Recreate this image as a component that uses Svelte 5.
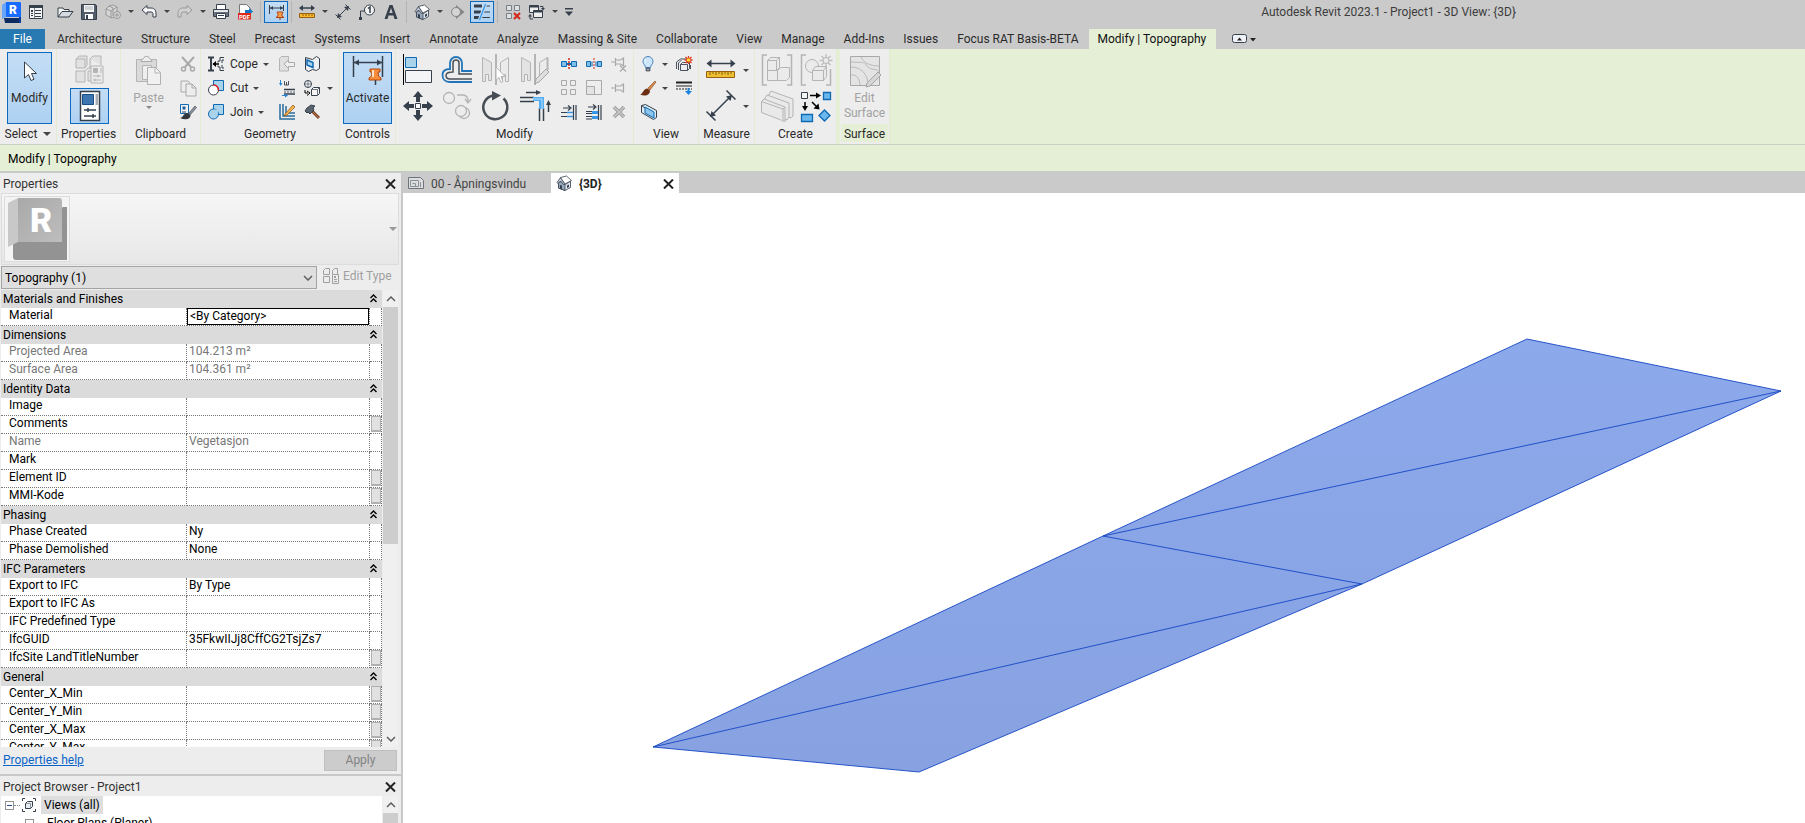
<script>
    const D = '#36404d'
    const B = '#0f6ab4'
    const L = '#a8d3ea'
    const G = '#b4b4b4'

    const house = `<g stroke="${D}" stroke-width=".8" stroke-linejoin="round"><path d="M2.500 7.500l3-1 4 3 5-3.500v6.500l-5.500 3-6.500-2.500z" fill="#dfe4ec"/><path d="M2.500 7.500l3-1 3.500 4V15.500l-6.500-2.500z" fill="#9aa9bd"/><path d="M1 7.500l3.500-5 4.500 6.500-1 1-3.500-4-2.500 2.500z" fill="#c3ccd9"/><path d="M4.500 2.500l6-1.500 5 4.500L9 9z" fill="#fff"/></g><path d="M4 10l2 .5v4L4 13.500zM11 10.500l2-1v2.500l-2 1z" fill="${D}"/>`
    const pages = (s, f) => `<path d="M1 1h7l2 2v9H1z" fill="${f}" stroke="${s}"/><path d="M6 4h6l4 4v8H6z" fill="#ededed" stroke="${s}"/><path d="M12 4v4h4" fill="none" stroke="${s}"/>`

    const icons = {
        list: `<path d="M1.500 1.500h13v13h-13z" fill="#f4f4f4" stroke="${D}"/><path d="M1 1h14v3H1z" fill="${D}"/><path d="M3 6h2v2H3zM3 9h2v1H3zM3 11h2v1H3zM7 6h6v1H7zM7 9h6v1H7zM7 12h6v1H7zM6 4h.6v10H6z" fill="${D}"/>`,
        open: `<path d="M1 13V4h5l1 1.500h5V8" fill="#f5f5f5" stroke="${D}"/><path d="M1 13l4-5.500h11L12 13z" fill="#d5dae0" stroke="${D}"/>`,
        save: `<path d="M.5.5h14l1 1v14H.5z" fill="#525d69" stroke="${D}"/><path d="M3 1h10v7H3z" fill="#f4f4f4"/><path d="M4 3h8M4 5h8" stroke="#aeb4bb"/><path d="M4 10h8v5H4z" fill="#fff"/><path d="M5 11h2v4H5z" fill="${D}"/>`,
        sync: `<g fill="#d5d5d5" stroke="#8c8c8c" stroke-width=".8"><path d="M1 5l3-3 4-1 4 2v8l-5 3-6-3zM1 5l5 2v7M6 7l6-4M4 2l4 2v8"/><circle cx="12" cy="11" r="3.500"/><path d="M10 11h4m-2-2v4"/></g>`,
        undo: `<path d="M1 6l5-4.500V4h4c4 0 5 3 5 6v3h-3v-3c0-1-.5-2-2-2H6v2.500z" fill="#f7f7f7" stroke="${D}"/>`,
        redo: `<path d="M15 6l-5-4.500V4H6C2 4 1 7 1 10v3h3v-3c0-1 .5-2 2-2h4v2.500z" fill="#d2d2d2" stroke="#999"/>`,
        print: `<path d="M3.500.5h9V6h-9z" fill="#fff" stroke="${D}"/><path d="M.5 5.500h15v7H.5z" fill="#6b7480" stroke="${D}"/><path d="M1 6h14v2H1z" fill="#e6e8ea"/><path d="M3.500 9.500h9v5h-9z" fill="#fff" stroke="${D}"/><path d="M5 11.500h6" stroke="${D}"/>`,
        pdf: `<path d="M2.500.5h7l4 4V13h-11z" fill="#fff" stroke="#777"/><path d="M8 6h4V4l4 3.500L12 11V9H8z" fill="#1476c4"/><path d="M1 9h13v6.500H1z" fill="#db2b1d"/><text x="7.500" y="14.500" font-family="Roboto, sans-serif" font-size="6" font-weight="700" text-anchor="middle" fill="#fff">PDF</text>`,
        dimpin: `<path d="M1.500 1v9M15.500 1v6M2 4h13" stroke="${D}" fill="none"/><path d="M2 4l3-2v4zM15 4l-3-2v4z" fill="${D}"/><path d="M9 8h6l-1 2v2l2 1.500H8L10 12v-2z" fill="#f9a04c" stroke="#b4460d"/><path d="M12 13.500V16" stroke="#8c3a12"/>`,
        ruler: `<path d="M1 4h14" stroke="${D}" stroke-width="1.500"/><path d="M0 4l4-3v6zM16 4l-4-3v6z" fill="${D}"/><path d="M.5 9.500h15v4H.5z" fill="#f5b92d" stroke="#9a6011"/><path d="M4 10v2m3-2v2m3-2v2m3-2v2" stroke="#9a6011"/>`,
        dim: `<path d="M3 13L13 3M.5 10.500l5 5M10.500.5l5 5" stroke="${D}" fill="none"/><path d="M2 14l1-5 4 4zM14 2l-1 5-4-4z" fill="${D}"/>`,
        tag: `<path d="M0 15h1.500V7H8" fill="none" stroke="${D}"/><path d="M0 13h3v3H0z" fill="${D}"/><circle cx="10.500" cy="6" r="5" fill="#f4f4f4" stroke="${D}"/><path d="M9 4.500L11 3v6" fill="none" stroke="${D}" stroke-width="1.500"/>`,
        text: `<path d="M1.500 15L6.500 1h3l5 14h-3l-1-3.500h-5L4.500 15zM6.300 9h3.400L8 4z" fill="${D}" fill-rule="evenodd"/>`,
        house,
        section: `<path d="M6 1l8.500 7L6 15z" fill="#858585"/><circle cx="6" cy="8" r="4.500" fill="#d4d4d4" stroke="#858585"/>`,
        thin: `<path d="M0 2h8M0 8h7M0 13.500h6" stroke="${D}" stroke-width="3"/><path d="M11 2h5M9 8h7M8 13.500h8" stroke="${D}"/><path d="M11.500 0l-6 16" stroke="#c2dcf4" stroke-width="3.500"/><path d="M11.500 0l-6 16" stroke="#3796e8" stroke-width="1.300"/>`,
        closewin: `<path d="M1.500 1.500h5v5h-5zM9.500 1.500h5v5h-5zM1.500 9.500h5v5h-5z" fill="#e0e0e0" stroke="#777f88"/><path d="M9 9l6 6m0-6l-6 6" stroke="#d22a1e" stroke-width="2.200"/>`,
        switch: `<path d="M.5 1.500h9v7h-9z" fill="#eee" stroke="${D}"/><path d="M4.500 6.500h9v7h-9z" fill="#eee" stroke="${D}"/><path d="M.5 2.500h9M4.500 7.500h9" stroke="${D}" stroke-width="2"/><path d="M11 2.500h3V5M4 15H1v-3" fill="none" stroke="${D}"/><path d="M12 4h4l-2 2.500zM-1 12.500h4L1 10z" fill="${D}"/>`,
        more: `<path d="M4 4h8v1.500H4zM4 7.500h8L8 12z" fill="${D}"/>`,

        cursor: `<path d="M10.500 7v16l4-3.500 2.500 6 3-1.200-2.500-5.800h5z" fill="#fff" stroke="${D}" stroke-linejoin="round"/>`,
        typeprops: `<g fill="#e2e2e2" stroke="${G}"><path d="M2 5l3-3h8v9l-2 3H2zM16 5l3-3h8v9M16 14V5l3-3M2 17h9v11H2zM14 17h4v10h-4zM2 5h9v9M11 17l3-3h5"/><path d="M17 12h12v17H17z" fill="#ececec"/><path d="M19.500 14.500h4v4h-4z" fill="${G}"/><path d="M19 22h8M19 26h8M24 20.500v3M21 24.500v3M27 14v5"/></g>`,
        palette: `<path d="M6.500 1.500h19v29h-19z" fill="#fff" stroke="${D}" stroke-width="1.500"/><path d="M8.500 4.500h11v10h-11z" fill="#3d76b1" stroke="#184c85"/><path d="M21.500 4h2.500v11h-2.500z" fill="#a9adb2"/><path d="M10 20h12M10 26h12M14 18v4M19 24v4" stroke="${D}" stroke-width="1.500"/>`,
        paste: `<path d="M3.500 4.500h20v22h-20z" fill="#dadada" stroke="${G}"/><path d="M8 6.500c0-2 2-1.500 3-4 1-1.500 4-1.500 5 0 1 2.500 3 2 3 4z" fill="#ededed" stroke="#a8a8a8"/><path d="M9.500 10.500h9v14h-9z" fill="#eee" stroke="${G}"/><path d="M14.500 12.500h8l5 5v12h-13z" fill="#f0f0f0" stroke="#b0b0b0"/><path d="M22 13v5h5" fill="none" stroke="${G}"/>`,
        cut: `<path d="M2 1l9 10M14 1L5 11" stroke="#a9a9a9" stroke-width="2"/><circle cx="3.500" cy="13" r="2" fill="none" stroke="#a9a9a9" stroke-width="1.500"/><circle cx="12.500" cy="13" r="2" fill="none" stroke="#a9a9a9" stroke-width="1.500"/>`,
        copyclip: pages('#a9a9a9', '#ececec'),
        match: `<path d="M.5.5h8v9h-8z" fill="#f4f4f4" stroke="${B}"/><path d="M2.500 2.500h3v3h-3z" fill="#215d9c"/><path d="M2 8h4" stroke="${D}"/><path d="M15 2L9 9l1.500 1.500 6-7z" fill="#8b929b" stroke="${D}" stroke-width=".6"/><path d="M0 14c3 0 3-5 8-5l2.500 2c0 5-6 5-10.500 3z" fill="#33363b"/>`,
        cope: `<path d="M0 1.500h6M0 14.500h6M3 1v14" stroke="${D}" stroke-width="2"/><path d="M5 8h6" stroke="#000" stroke-width="1.500"/><path d="M4.500 8L8 5v6z"/><path d="M16 1.500h-4V5h-2v1.500M16 4h-2v3M16 14.500h-4V11h-2V9.500M16 12h-2V9" stroke="${D}" fill="none"/>`,
        cutgeo: `<path d="M5.500.5h10v10h-10z" fill="${L}" stroke="${B}"/><circle cx="5.500" cy="10" r="5" fill="#fff" stroke="${D}"/><path d="M5.500 5a5 5 0 0 1 5 5.500" fill="none" stroke="#e02020" stroke-width="1.500"/>`,
        join: `<path d="M5.500.5h10v10h-10z" fill="${L}" stroke="${B}"/><circle cx="5.500" cy="10" r="5" fill="${L}" stroke="${B}"/><path d="M6 5.500h4V10H6z" fill="${L}"/>`,
        uncope: `<path d="M.5 2.500l2-2h7v3l-3 4.500 3 4v3h-9z" fill="#e0e0e0" stroke="${G}"/><path d="M5 8l4.500-4v2.500h6v4h-6V12.500z" fill="#efefef" stroke="#a9a9a9"/>`,
        beam: `<path d="M5 9.500h11M5 14h11" stroke="${D}" stroke-width="1.300"/><path d="M5 12h11" stroke="${D}" stroke-width=".8" stroke-dasharray="2 1"/><path d="M5.500 1v4h4V1M7.500 2v3" stroke="${D}" fill="none" stroke-width=".9"/><path d="M1.500 0v4M3 15.500h4" stroke="#2784d8"/><path d="M0 3h3.500L1.700 6zM6 13.500l3 2-3 2z" fill="#2784d8"/>`,
        layers: `<path d="M1 0v15h15M4 0v12h12M7 2v7h9" fill="none" stroke="#286c9c" stroke-width="1.500"/><path d="M6 10L14 1l2 2-8 8-3 1z" fill="#f4b64f" stroke="#8e4b10" stroke-width=".7"/>`,
        wallopen: `<path d="M1.500 1.500l7 2 4-3 3 2v10l-3 2-4-1-4 2-3-2z" fill="#eef0f2" stroke="${D}"/><path d="M3 4l6 2.500v5L3 9z" fill="${L}" stroke="${B}" stroke-width="1.500"/>`,
        split: `<circle cx="4" cy="4" r="3.500" fill="#f3f3f3" stroke="${D}"/><path d="M4 .5v7M.5 4h7" stroke="${D}" stroke-width=".6"/><path d="M7.500 9.500l2-2h6v6l-2 2h-6z" fill="#f5f5f5" stroke="${D}"/><path d="M13.500 15V9.500h-6M13.500 9.500l2-2" fill="none" stroke="${D}" stroke-width=".7"/><path d="M1 10v3h3M3 11l3 2-3 2.500" fill="none" stroke="#000"/>`,
        hammer: `<path d="M7 6l8 8" stroke="#7b4023" stroke-width="3"/><path d="M7 6l8 8" stroke="#be7c55"/><path d="M1 7l2-3 4-3 4 1-2 2 1 2-4 4-2-2-1 1z" fill="#5b6570" stroke="${D}"/>`,

        activate: `<path d="M1.500 1v21M30.500 1v21M2 7.500h28" stroke="${D}" stroke-width="1.500"/><path d="M2 7.500l5-3v6zM30 7.500l-5-3v6z" fill="${D}"/><path d="M18 14h10v3h-2l.5 4 2.500 2v2H17v-2l2.500-2 .5-4h-2z" fill="#f98d3b" stroke="#b2480c"/><path d="M21 15v7" stroke="#ffe0c2" stroke-width="2"/><path d="M23.500 25v5" stroke="${D}" stroke-width="1.500"/>`,
        align: `<path d="M1.500 0v31" stroke="#000"/><path d="M3.500 3.500h11v10h-11z" fill="${L}" stroke="${B}"/><path d="M3.500 16.500h26v12h-26z" fill="#f4f4f6" stroke="${D}"/>`,
        offset: `<path d="M31 17H21V9a6 6 0 0 0-12 0v6c-5 0-7.500 2-7.500 6s2.500 7 7 7H31" fill="none" stroke="#2275b9" stroke-width="1.800"/><path d="M31 20H18V9a3 3 0 0 0-6 0v9c-4 0-7 1-7 3.500S7 25 9 25h22" fill="none" stroke="#4a5058" stroke-width="1.500"/>`,
        mirrorpick: `<g fill="#e3e3e3" stroke="${G}"><path d="M2.500 3.500l9 5v18h-3v-6h-3v7h-3z"/><path d="M28.500 3.500l-8 5v18h2v-6h3v7h3z" fill="#ebebeb"/><path d="M16 0v31" stroke-width="2"/><path d="M16 13v13l3-2.500 2 5 2-1-2-5h4z" fill="#fff"/></g>`,
        mirrordraw: `<g fill="#e3e3e3" stroke="${G}"><path d="M2.500 3.500l9 5v18h-3v-6h-3v7h-3z"/><path d="M28.500 3.500l-8 5v18" fill="#ebebeb"/><path d="M28.500 3.500V16M16 0v31" stroke-width="2"/><path d="M17 25l10-10 3 3-10 10-4 1.500z" fill="#dedede" stroke="#a5a5a5"/></g>`,
        move: `<path d="M16 1l5 6h-3v5h-4V7h-3zM16 31l5-6h-3v-5h-4v5h-3zM1 16l6-5v3h5v4H7v3zM31 16l-6-5v3h-5v4h5v3z" fill="${D}"/><path d="M13.500 13.500h5v5h-5z" fill="#fff" stroke="${D}"/>`,
        copy: `<g fill="#ededed" stroke="${G}" stroke-width="1.300"><circle cx="8" cy="8" r="5.500"/><circle cx="23" cy="23" r="5.500"/><circle cx="20" cy="21" r="5.500"/><path d="M16 5h6q5 0 5 7M24 9l3 4 3-4" fill="none"/></g>`,
        rotate: `<path d="M23.500 8.500A12 12 0 1 1 13 5.500" fill="none" stroke="#474d54" stroke-width="2.500"/><path d="M12 1l9 4.500-9 5z" fill="#474d54"/>`,
        trim: `<path d="M1 7.500h14M1 11.500h14M20.500 18v13M24.500 18v13" stroke="${D}" stroke-width="1.500"/><path d="M14 7h11v12h-5v-8h-6z" fill="#54aef3"/><path d="M14 9h9v10" fill="none" stroke="#b8def9"/><path d="M7 2.500h14M29.500 22V12" stroke="${D}" stroke-width="1.500"/><path d="M17 0l5 2.500L17 5zM27 15l2.500-5 2.500 5z" fill="${D}"/>`,
        splitel: `<path d="M.5 5.500h5v5h-5zM10.500 5.500h5v5h-5z" fill="#7fbfe6" stroke="${B}"/><path d="M5 8h6" stroke="${B}" stroke-width="2"/><path d="M8 2v12" stroke="#d22a1e" stroke-width="1.500" stroke-dasharray="2 1"/>`,
        splitgap: `<path d="M.5 5.500h4v5h-4zM11.500 5.500h4v5h-4z" fill="#7fbfe6" stroke="${B}"/><path d="M6 5.500v5M10 5.500v5" stroke="${B}"/><path d="M8 2v12" stroke="#d22a1e" stroke-dasharray="2 1"/>`,
        array: `<path d="M.5.5h5v5h-5zM9.500.5h5v5h-5zM.5 9.500h5v5h-5zM9.500 9.500h5v5h-5z" fill="#ededed" stroke="#a9a9a9"/>`,
        scale: `<path d="M.5.500h15v14H.5z" fill="#ededed" stroke="#a9a9a9"/><path d="M.5 6.500h8v8h-8z" fill="#e3e3e3" stroke="#a9a9a9"/>`,
        trimone: `<path d="M0 8.500h9M0 12.500h9M12.500 1v15M15 1v15" stroke="${D}" stroke-width="1.200"/><path d="M6 8.500h6M6 12.500h6" stroke="#3796e8" stroke-width="1.500"/><path d="M2 4h7M7 1.500L10 4 7 6.500" stroke="${D}" fill="none" stroke-width="1.200"/>`,
        trimmany: `<path d="M0 7.500h6M0 9.500h6M0 12.500h6M0 15h6M12.500 1v15M15 1v15" stroke="${D}" stroke-width="1.200"/><path d="M6 8.500h6M6 13.500h6" stroke="#3796e8" stroke-width="3"/><path d="M2 3h7M7 .5L10 3 7 5.500" stroke="${D}" fill="none" stroke-width="1.200"/>`,
        unpin: `<path d="M0 6h4M4.500 2v8M4.500 4h5l3-2v8l-3-2h-5M9 9.500l6 6m0-6l-6 6" fill="none" stroke="#a9a9a9" stroke-width="1.200"/>`,
        pin: `<path d="M0 8h4M4.500 4v8M4.500 6h5l3-2v8l-3-2h-5" fill="none" stroke="#a9a9a9" stroke-width="1.200"/>`,
        del: `<path d="M3 3l10 10m0-10L3 13" stroke="#9c9c9c" stroke-width="3.500"/><path d="M3 3l10 10m0-10L3 13" stroke="#c8c8c8" stroke-width="1.500"/>`,

        bulb: `<path d="M8 .5a5 5 0 0 1 5 5c0 3-2.500 3.500-2.500 6h-5c0-2.500-2.500-3-2.500-6a5 5 0 0 1 5-5z" fill="#cce5fa" stroke="#4c82bd"/><path d="M6 12h4v3H6z" fill="#8f959b" stroke="${D}" stroke-width=".7"/><path d="M6 3c-1 1-1 2-1 3" stroke="#fff" fill="none"/>`,
        boxnew: `<g fill="#eee" stroke="${D}" stroke-width=".9"><path d="M.5 13V6l4-3h6M2.500 14V7l3-3M14.500 9v4"/><path d="M4.500 8.500l2-2h7v6l-2 2h-7zM4.500 8.500h7v6"/></g><path d="M12.500 0v8M8.500 4h8M9.500 1l6 6m0-6l-6 6" stroke="#e0371c" stroke-width="1.300"/><circle cx="12.500" cy="4" r="1.800" fill="#ffdb2d"/>`,
        brush: `<path d="M15 1L8 8l2 2 6-8z" fill="#d58b4d" stroke="#86451d" stroke-width=".6"/><path d="M0 14.500c3 0 3-6 7.500-6l2.500 2c0 5-5 6-10 4z" fill="#6a2e12"/>`,
        linework: `<path d="M0 2.500h16" stroke="#222" stroke-width="2"/><path d="M0 6h16" stroke="#222"/><path d="M0 9h16" stroke="#222" stroke-dasharray="2 1"/><path d="M11.500 8h2v3H16l-3.500 4L9 11h2.500z" fill="#1884df"/>`,
        secbox: `<path d="M.5 1.500l4-1 11 6v7l-3 2-12-7z" fill="#d8edf9" stroke="${D}"/><path d="M4 3l9 5v6L4 9z" fill="#8dc5eb" stroke="${B}"/><path d="M.5 1.500L4 4" stroke="${D}"/>`,

        measure: `<path d="M3 9.500h26" stroke="${D}" stroke-width="1.500"/><path d="M1.500 9.500l5-4v8zM30.500 9.500l-5-4v8z" fill="${D}"/><path d="M1.500 17.500h28v6h-28z" fill="#edc033" stroke="#9a6011"/><path d="M5 18v3m3-3v2m3-2v3m3-3v2m3-2v3m3-3v2m3-2v3m3-3v2" stroke="#8a5a11"/>`,
        aligned: `<path d="M6 26L26 6M1.500 21.500l9 9M21.500.5l9 9" stroke="${D}" stroke-width="1.500" fill="none"/><path d="M5 27l1.500-6 4.500 4.500zM27 5l-1.500 6L21 6.500z" fill="${D}"/>`,
        group: `<g fill="#ebebeb" stroke="${G}"><path d="M6 1H1.500v30H6M26 1h4.500v30H26" fill="none" stroke-width="1.500"/><path d="M6.500 6.500l3-3h9v10l-3 3h-9zM6.500 16.500h10v10h-10zM16.500 16.500l3-3h9v10l-3 3h-9M6.500 6.500h9v10M15.500 6.500l3-3"/></g>`,
        assembly: `<g fill="#ebebeb" stroke="${G}"><path d="M6 1H1.500v30H6M26 31h4.500V15" fill="none" stroke-width="1.500"/><circle cx="12" cy="12" r="6.500"/><path d="M12.500 16.500l3-4h11v10l-3 4h-11zM12.500 16.500h11v10M23.500 16.500l3-4"/><path d="M26 0v13M19.500 6.500h13M21.500 2l9 9m0-9l-9 9" stroke="#bdbdbd" stroke-width="1.300"/><circle cx="26" cy="6.500" r="3"/></g>`,
        similar: `<g fill="#e9e9e9" stroke="${G}" stroke-linejoin="round"><path d="M8 4l2-3 22 8v17l-2 2-22-8z"/><path d="M4 8l2-3 22 8v14l-2 3-22-9z"/><path d="M.5 11.500L3 9l21 8v14.500l-23.500-9z" /><path d="M.5 11.500L22 19v12.500M22 19l2-2"/></g>`,
        create: `<path d="M1.500 2.500h6v6h-6z" fill="#f5f5f5" stroke="${D}"/><path d="M23.500 2.500h7v7h-7zM1.500 24.500h11v7h-11zM19 25.500l5.500-5.500 5.500 5.500-5.500 5.500z" fill="#6bb9ec" stroke="${B}" stroke-width="1.300"/><path d="M10 5.500h8M5 12v7M12 12l5 5" stroke="#000" stroke-width="1.500"/><path d="M16 2.500l5 3-5 3zM2 16l3 5 3-5zM19.500 19.500l-6-1 5-5z"/>`,
        surface: `<path d="M1.500 1.500h29v29h-29z" fill="#e4e4e4" stroke="#a8a8a8"/><path d="M2 20c5-1 9 4 9 10M2 12c10 0 17 7 17 18M2 7c13 1 12-1 16 4s11 2 12 6M12 2c3 7 11 9 18 9" fill="none" stroke="#b9b9b9"/><path d="M18 28L29 17l3 3-11 11-4 1z" fill="#d6d6d6" stroke="#a5a5a5"/>`,

        sheet: `<path d="M.5 2.500h12l3 3v8H.5z" fill="#ddd" stroke="#6d747c"/><path d="M2.500 5.500h8v6h-8zM4.500 8.500h3v3M12.500 7v5" fill="none" stroke="#8a9199"/>`,
        edittype: `<g fill="none" stroke="#a0a0a0"><path d="M.5 2.500l2-2h4v6h-6zM9.500 6V2.500l2-2h3V6M.5 8.500h6v6h-6z"/><path d="M9.500 6.500h6v9h-6zM11 11.500h3M11 13.500h3"/></g><path d="M11 8h2v2h-2z" fill="#a0a0a0"/>`,
        viewsall: `<path d="M4 1.500H1.500V4M12 1.500h2.500V4M4 14.500H1.500V12M12 14.500h2.500V12" fill="none" stroke="${D}"/><path d="M4.500 6.500l2-2h5v5l-2 2h-5z" fill="#e8edf3" stroke="${D}"/><path d="M4.500 6.500h5v5" fill="none" stroke="${D}" stroke-width=".5"/>`
    }

    const quick = [
        { icon: 'list', label: 'Home', after: 5 },
        { icon: 'open', label: 'Open' },
        { icon: 'save', label: 'Save' },
        { icon: 'sync', label: 'Synchronize', arrow: true },
        { icon: 'undo', label: 'Undo', arrow: true },
        { icon: 'redo', label: 'Redo', arrow: true, off: true },
        { icon: 'print', label: 'Print' },
        { icon: 'pdf', label: 'Export PDF', sep: true },
        { icon: 'dimpin', label: 'Activate Controls', on: true, sep: true },
        { icon: 'ruler', label: 'Measure', arrow: true },
        { icon: 'dim', label: 'Aligned Dimension' },
        { icon: 'tag', label: 'Tag by Category' },
        { icon: 'text', label: 'Text', sep: true },
        { icon: 'house', label: 'Default 3D View', arrow: true },
        { icon: 'section', label: 'Section' },
        { icon: 'thin', label: 'Thin Lines', on: true, sep: true },
        { icon: 'closewin', label: 'Close Inactive Views' },
        { icon: 'switch', label: 'Switch Windows', arrow: true },
        { icon: 'more', label: 'Customize', slim: true }
    ]

    const tabs = ['Architecture', 'Structure', 'Steel', 'Precast', 'Systems', 'Insert', 'Annotate', 'Analyze', 'Massing & Site', 'Collaborate', 'View', 'Manage', 'Add-Ins', 'Issues', 'Focus RAT Basis-BETA', 'Modify | Topography']
    let active_tab = $state('Modify | Topography')

    const groups = [
        { name: 'Materials and Finishes', rows: [{ k: 'Material', v: '<By Category>', edit: true }] },
        { name: 'Dimensions', rows: [
            { k: 'Projected Area', v: '104.213 m²', off: true },
            { k: 'Surface Area', v: '104.361 m²', off: true }
        ] },
        { name: 'Identity Data', rows: [
            { k: 'Image' },
            { k: 'Comments', btn: true },
            { k: 'Name', v: 'Vegetasjon', off: true },
            { k: 'Mark' },
            { k: 'Element ID', btn: true },
            { k: 'MMI-Kode', btn: true }
        ] },
        { name: 'Phasing', rows: [{ k: 'Phase Created', v: 'Ny' }, { k: 'Phase Demolished', v: 'None' }] },
        { name: 'IFC Parameters', rows: [
            { k: 'Export to IFC', v: 'By Type' },
            { k: 'Export to IFC As' },
            { k: 'IFC Predefined Type' },
            { k: 'IfcGUID', v: '35FkwIIJj8CffCG2TsjZs7' },
            { k: 'IfcSite LandTitleNumber', btn: true }
        ] },
        { name: 'General', rows: [
            { k: 'Center_X_Min', btn: true },
            { k: 'Center_Y_Min', btn: true },
            { k: 'Center_X_Max', btn: true },
            { k: 'Center_Y_Max', btn: true }
        ] }
    ]

    let collapsed = $state({})
    const toggle = name => { collapsed[name] = !collapsed[name] }
</script>

{#snippet icon(name, size = 16)}
    <svg class="icon" width={size} height={size} viewBox="0 0 {size} {size}" fill="none" aria-hidden="true">
        <g fill="#000">{@html icons[name]}</g>
    </svg>
{/snippet}

{#snippet small(name, label, off = false)}
    <button class="small" aria-label={label} disabled={off}>{@render icon(name)}</button>
{/snippet}

{#snippet large(name, label, off = false)}
    <button class="large" aria-label={label} disabled={off}>{@render icon(name, 32)}</button>
{/snippet}

{#snippet arrow(label)}
    <button class="arrow" aria-label="{label} options"></button>
{/snippet}

{#snippet closer(label)}
    <button class="close" aria-label={label}>
        <svg width="11" height="10" viewBox="0 0 11 10" aria-hidden="true"><path d="M1 .5l9 9m0-9l-9 9" stroke="#222" stroke-width="2" /></svg>
    </button>
{/snippet}

{#snippet chevron(dir)}
    <svg width="10" height="6" viewBox="0 0 10 6" aria-hidden="true"><path d={dir === 'up' ? 'M1 5l4-4 4 4' : 'M1 1l4 4 4-4'} fill="none" stroke="#606060" stroke-width="1.500" /></svg>
{/snippet}

<div class="app">
    <header class="titlebar">
        <button class="logo" aria-label="Revit">
            <svg width="22" height="22" viewBox="0 0 22 22" aria-hidden="true">
                <path d="M1 4l4-3v15l-4 2z" fill="#66a5f8" />
                <path d="M3 17h17v5H4z" fill="#0c2b63" />
                <path d="M18 4h2v18h-2z" fill="#0c3f9c" />
                <path d="M5 1h14q1 0 1 1v14H5z" fill="#186bff" />
                <text x="12" y="13" text-anchor="middle" font-size="12" font-weight="900" fill="#fff">R</text>
            </svg>
        </button>
        {#each quick as q}
            <button class="quick" class:on={q.on} class:slim={q.slim} style:margin-right="{q.after ?? 0}px" aria-label={q.label} disabled={q.off}>{@render icon(q.icon)}</button>
            {#if q.arrow}{@render arrow(q.label)}{/if}
            {#if q.sep}<span class="sep"></span>{/if}
        {/each}
        <h1>Autodesk Revit 2023.1 - Project1 - 3D View: {'{3D}'}</h1>
    </header>

    <nav class="tabs">
        <button class="file">File</button>
        {#each tabs as tab}
            <button class="tab" class:active={tab === active_tab} onclick={() => (active_tab = tab)}>{tab}</button>
        {/each}
        <button class="minimise" aria-label="Minimise ribbon">
            <svg width="24" height="10" viewBox="0 0 24 10" aria-hidden="true">
                <rect x=".5" y=".5" width="14" height="8" rx="2" fill="#eef1f5" stroke="#36404d" />
                <path d="M5 6.500h5L7.500 3.500zM18 4h6l-3 3.500z" fill="#222" />
            </svg>
        </button>
    </nav>

    <div class="ribbon">
        <section class="panel select">
            <div class="tools">
                <button class="tall on">{@render icon('cursor', 32)}<span>Modify</span></button>
            </div>
            <h2>Select <i class="tri"></i></h2>
        </section>
        <section class="panel properties">
            <div class="tools col">
                {@render large('typeprops', 'Type Properties', true)}
                <button class="large on" aria-label="Properties">{@render icon('palette', 32)}</button>
            </div>
            <h2>Properties</h2>
        </section>
        <section class="panel clipboard">
            <div class="tools">
                <button class="tall" disabled>{@render icon('paste', 32)}<span>Paste</span><i class="tri tiny"></i></button>
                <div class="col">
                    {@render small('cut', 'Cut to Clipboard', true)}
                    {@render small('copyclip', 'Copy to Clipboard', true)}
                    {@render small('match', 'Match Type')}
                </div>
            </div>
            <h2>Clipboard</h2>
        </section>
        <section class="panel geometry">
            <div class="tools">
                <div class="col wide">
                    <div class="row"><button class="named">{@render icon('cope')}Cope</button>{@render arrow('Cope')}</div>
                    <div class="row"><button class="named">{@render icon('cutgeo')}Cut</button>{@render arrow('Cut')}</div>
                    <div class="row"><button class="named">{@render icon('join')}Join</button>{@render arrow('Join')}</div>
                </div>
                <div class="col">
                    {@render small('uncope', 'Wall Joins', true)}
                    {@render small('beam', 'Beam Joins')}
                    {@render small('layers', 'Split Face')}
                </div>
                <div class="col">
                    {@render small('wallopen', 'Wall Opening')}
                    <div class="row">{@render small('split', 'Paint')}{@render arrow('Paint')}</div>
                    {@render small('hammer', 'Demolish')}
                </div>
            </div>
            <h2>Geometry</h2>
        </section>
        <section class="panel controls">
            <div class="tools">
                <button class="tall on">{@render icon('activate', 32)}<span>Activate</span></button>
            </div>
            <h2>Controls</h2>
        </section>
        <section class="panel modify">
            <div class="tools">
                <div class="col">{@render large('align', 'Align')}{@render large('move', 'Move')}</div>
                <div class="col">{@render large('offset', 'Offset')}{@render large('copy', 'Copy', true)}</div>
                <div class="col">{@render large('mirrorpick', 'Mirror - Pick Axis', true)}{@render large('rotate', 'Rotate')}</div>
                <div class="col">{@render large('mirrordraw', 'Mirror - Draw Axis', true)}{@render large('trim', 'Trim to Corner')}</div>
                <div class="col lead">{@render small('splitel', 'Split Element')}{@render small('array', 'Array', true)}{@render small('trimone', 'Trim Single')}</div>
                <div class="col">{@render small('splitgap', 'Split with Gap')}{@render small('scale', 'Scale', true)}{@render small('trimmany', 'Trim Multiple')}</div>
                <div class="col">{@render small('unpin', 'Unpin', true)}{@render small('pin', 'Pin', true)}{@render small('del', 'Delete', true)}</div>
            </div>
            <h2>Modify</h2>
        </section>
        <section class="panel view">
            <div class="tools">
                <div class="col wide">
                    <div class="row">{@render small('bulb', 'Hide in View')}{@render arrow('Hide')}</div>
                    <div class="row">{@render small('brush', 'Override Graphics')}{@render arrow('Override')}</div>
                    <div class="row">{@render small('secbox', 'Selection Box')}</div>
                </div>
                <div class="col">{@render small('boxnew', 'Displace Elements')}{@render small('linework', 'Linework')}</div>
            </div>
            <h2>View</h2>
        </section>
        <section class="panel measure">
            <div class="tools col">
                <div class="row">{@render large('measure', 'Measure')}{@render arrow('Measure')}</div>
                <div class="row">{@render large('aligned', 'Dimension')}{@render arrow('Dimension')}</div>
            </div>
            <h2>Measure</h2>
        </section>
        <section class="panel create">
            <div class="tools">
                <div class="col">{@render large('group', 'Create Group', true)}{@render large('similar', 'Create Parts', true)}</div>
                <div class="col">{@render large('assembly', 'Create Assembly', true)}{@render large('create', 'Create Similar')}</div>
            </div>
            <h2>Create</h2>
        </section>
        <section class="panel surface">
            <div class="tools">
                <button class="tall" disabled>{@render icon('surface', 32)}<span>Edit<br />Surface</span></button>
            </div>
            <h2>Surface</h2>
        </section>
    </div>

    <div class="options">Modify | Topography</div>

    <div class="work">
        <aside class="dock">
            <section class="props">
                <div class="head"><h3>Properties</h3>{@render closer('Close Properties')}</div>
                <button class="preview" aria-label="Type selector">
                    <span class="thumb">
                        <svg width="64" height="64" viewBox="0 0 64 64" aria-hidden="true">
                            <defs>
                                <linearGradient id="face" x2="1" y2="1"><stop stop-color="#a9a9a9" /><stop offset="1" stop-color="#bdbdbd" /></linearGradient>
                            </defs>
                            <path d="M8 44l50-34h4v53H11q-3 0-3-3z" fill="#939393" />
                            <path d="M3 6l10-5v44L3 50z" fill="#c8c8c8" />
                            <path d="M13 1h41q3 0 3 3v41H13z" fill="url(#face)" />
                            <text x="36" y="35" text-anchor="middle" font-size="34" font-weight="900" fill="#fff">R</text>
                        </svg>
                    </span>
                    <i class="tri"></i>
                </button>
                <div class="type">
                    <div class="picker">
                        <select aria-label="Element filter"><option>Topography (1)</option></select>
                        {@render chevron('down')}
                    </div>
                    <button class="edit" disabled>{@render icon('edittype')}Edit Type</button>
                </div>
                <div class="grid">
                    <div class="list">
                        <table>
                            <colgroup><col class="key" /><col /><col class="extra" /></colgroup>
                            {#each groups as g}
                                <tbody>
                                    <tr class="group">
                                        <th colspan="2">{g.name}</th>
                                        <td>
                                            <button aria-label="Collapse {g.name}" onclick={() => toggle(g.name)}>
                                                <svg width="7" height="9" viewBox="0 0 7 9" aria-hidden="true"><path d="M.5 4l3-3 3 3M.5 8l3-3 3 3" fill="none" stroke="#000" stroke-width="1.400" /></svg>
                                            </button>
                                        </td>
                                    </tr>
                                    {#if !collapsed[g.name]}
                                        {#each g.rows as r}
                                            <tr class:off={r.off}>
                                                <th>{r.k}</th>
                                                <td class:editing={r.edit}>
                                                    {#if r.edit}<input aria-label={r.k} value={r.v} />{:else}{r.v ?? ''}{/if}
                                                </td>
                                                <td class="more">{#if r.btn}<button aria-label="Edit {r.k}"></button>{/if}</td>
                                            </tr>
                                        {/each}
                                    {/if}
                                </tbody>
                            {/each}
                        </table>
                    </div>
                    <div class="scroll">
                        <button aria-label="Scroll up">{@render chevron('up')}</button>
                        <span class="track"><span class="thumbbar"></span></span>
                        <button aria-label="Scroll down">{@render chevron('down')}</button>
                    </div>
                </div>
                <div class="foot">
                    <a href="#help">Properties help</a>
                    <button class="apply" disabled>Apply</button>
                </div>
            </section>
            <section class="browser">
                <div class="head"><h3>Project Browser - Project1</h3>{@render closer('Close Project Browser')}</div>
                <div class="grid">
                    <ul class="tree">
                        <li>
                            <button class="node" aria-label="Collapse Views"></button><span class="dash"></span>{@render icon('viewsall')}<span class="sel">Views (all)</span>
                        </li>
                        <li class="child"><button class="node" aria-label="Collapse Floor Plans"></button>Floor Plans (Planer)</li>
                    </ul>
                    <div class="scroll">
                        <button aria-label="Scroll up">{@render chevron('up')}</button>
                        <span class="track"><span class="thumbbar"></span></span>
                    </div>
                </div>
            </section>
        </aside>

        <main>
            <div class="views">
                <button class="viewtab">{@render icon('sheet')}<span>00 - Åpningsvindu</span></button>
                <div class="viewtab current">
                    {@render icon('house')}<span>{'{3D}'}</span>{@render closer('Close view')}
                </div>
            </div>
            <svg class="canvas" viewBox="0 0 1402 630" preserveAspectRatio="xMidYMid meet" role="img" aria-label="Topography surface">
                <defs>
                    <linearGradient id="shade" x2="0" y2="1"><stop stop-color="#8ca9eb" /><stop offset="1" stop-color="#88a2e1" /></linearGradient>
                </defs>
                <path d="M250 554L700 343 1124 146 1378 198 959 391 516 579z" fill="url(#shade)" />
                <path d="M250 554L700 343 1124 146 1378 198 959 391 516 579zM250 554L959 391 700 343 1378 198" fill="none" stroke="#1546c4" stroke-width=".9" stroke-linejoin="round" />
            </svg>
        </main>
    </div>
</div>

<style>
    :global(body) {
        margin: 0;
        overflow: hidden;
    }

    .app {
        display: flex;
        flex-direction: column;
        height: 100vh;
        background: #ededed;
        color: #2a2a2a;
        font: 12px/16px Roboto, "Noto Sans", sans-serif;
    }

    .app :is(button, input, select) {
        box-sizing: border-box;
        margin: 0;
        padding: 0;
        border: 0;
        background: none;
        color: inherit;
        font: inherit;
    }

    h1, h2, h3, ul {
        margin: 0;
        padding: 0;
        font-size: 12px;
        font-weight: 400;
    }

    .icon {
        display: block;
        flex: none;
        overflow: visible;
    }

    .row, .tools {
        display: flex;
    }

    .col {
        display: flex;
        flex-direction: column;
    }

    .tri {
        border: 4px solid transparent;
        border-top-color: #444;
        border-bottom: 0;
    }

    .tri.tiny {
        border-width: 3px;
        border-bottom: 0;
        border-top-color: #888;
    }

    /* title bar */
    .titlebar {
        display: flex;
        align-items: center;
        flex: none;
        height: 29px;
        padding-bottom: 6px;
        box-sizing: border-box;
        background: #cacaca;
    }

    .app .logo {
        width: 24px;
        height: 22px;
        padding-left: 1px;
    }

    .logo svg {
        display: block;
    }

    .app .quick {
        display: flex;
        align-items: center;
        justify-content: center;
        width: 24px;
        height: 22px;
        flex: none;
    }

    .app .quick.slim {
        width: 16px;
    }

    .app .arrow {
        display: flex;
        align-items: center;
        justify-content: center;
        width: 12px;
        flex: none;
    }

    .arrow::before {
        content: '';
        border: 3px solid transparent;
        border-top-color: #444;
        border-bottom: 0;
    }

    .sep {
        flex: none;
        width: 1px;
        height: 22px;
        margin: 0 3px;
        background: #b4b4b4;
    }

    .app .on {
        border: 1px solid #0b69bf;
        background: linear-gradient(#c4ddf4, #aed1f2);
    }

    h1 {
        flex: 1;
        padding-right: 289px;
        text-align: right;
        color: #3c3c3c;
    }

    /* ribbon tabs */
    .tabs {
        display: flex;
        flex: none;
        height: 20px;
        background: #cacaca;
    }

    .app .file {
        width: 45px;
        margin-right: 3px;
        background: #2779b1;
        color: #fff;
    }

    .app .tab {
        padding: 0 10px 0 9px;
        white-space: nowrap;
    }

    .app .tab.active {
        background: #e5efd5;
        color: #111;
    }

    .app .minimise {
        display: flex;
        align-items: center;
        margin-left: 16px;
    }

    /* ribbon */
    .ribbon {
        display: flex;
        flex: none;
        height: 95px;
        background: #e5efd5;
        border-bottom: 1px solid #c9cfc1;
    }

    .panel {
        display: flex;
        flex-direction: column;
        box-sizing: border-box;
        padding-top: 3px;
        border-right: 1px solid #e1ecd2;
        background: #ededed;
    }

    .panel .tools {
        height: 72px;
    }

    .panel h2 {
        display: flex;
        align-items: center;
        justify-content: center;
        gap: 6px;
        padding-top: 2px;
    }

    .select { width: 57px; }
    .properties { width: 64px; }
    .clipboard { width: 80px; }
    .geometry { width: 139px; }
    .controls { width: 56px; }
    .modify { width: 238px; }
    .view { width: 65px; }
    .measure { width: 56px; }
    .create { width: 82px; margin-right: 3px; }
    .surface { width: 50px; }

    .surface h2 {
        margin: 0 1px;
        background: #e5efd5;
    }

    .select .tools {
        padding-left: 7px;
    }

    .properties .tools {
        padding-left: 13px;
    }

    .controls .tools {
        padding-left: 3px;
    }

    .clipboard .tools {
        padding-left: 5px;
        gap: 4px;
    }

    .geometry .tools {
        padding-left: 7px;
    }

    .geometry .wide {
        width: 66px;
    }

    .modify .tools {
        padding-left: 2px;
    }

    .modify .lead {
        margin-left: 2px;
    }

    .view .tools {
        padding-left: 3px;
    }

    .view .wide {
        width: 34px;
    }

    .view .row .small {
        width: 24px;
    }

    .measure .tools {
        padding-left: 2px;
    }

    .create .tools {
        padding-left: 2px;
    }

    .app .large {
        display: flex;
        align-items: center;
        justify-content: center;
        width: 39px;
        height: 36px;
    }

    .app .small {
        display: flex;
        align-items: center;
        justify-content: center;
        width: 25px;
        height: 24px;
    }

    .app .named {
        display: flex;
        align-items: center;
        gap: 6px;
        height: 24px;
        margin-right: 2px;
    }

    .app .tall {
        display: flex;
        flex-direction: column;
        align-items: center;
        width: 45px;
        height: 72px;
        padding-top: 3px;
    }

    .app .tall.on {
        padding-top: 2px;
    }

    .controls .tall {
        width: 49px;
    }

    .tall span {
        padding-top: 4px;
        line-height: 15px;
    }

    .app .tall:disabled {
        color: #a2a2a2;
    }

    .surface .tall {
        width: 49px;
    }

    .options {
        flex: none;
        height: 26px;
        padding-left: 8px;
        line-height: 29px;
        background: #e5efd5;
        border-bottom: 2px solid #c8cac6;
        color: #000;
    }

    /* docked palettes */
    .work {
        display: flex;
        flex: 1;
        min-height: 0;
    }

    .dock {
        display: flex;
        flex-direction: column;
        flex: none;
        width: 401px;
        border-right: 2px solid #c8c8c8;
    }

    .props {
        display: flex;
        flex-direction: column;
        flex: 1;
        min-height: 0;
        border-bottom: 2px solid #c8c8c8;
    }

    .head {
        display: flex;
        align-items: center;
        justify-content: space-between;
        flex: none;
        height: 20px;
        padding: 0 4px 0 3px;
    }

    .head h3 {
        padding-top: 2px;
        color: #333;
    }

    .app .close {
        display: flex;
        align-items: center;
        justify-content: center;
        width: 13px;
        height: 18px;
        padding-top: 1px;
    }

    .app .preview {
        display: flex;
        align-items: center;
        justify-content: space-between;
        flex: none;
        height: 72px;
        margin: 0 2px 1px 1px;
        padding: 0 1px 0 2px;
        border: 1px solid #dcdcdc;
        background: linear-gradient(#f6f6f6, #e7e7e7);
    }

    .thumb {
        width: 64px;
        height: 64px;
        border: 1px solid #dcdcdc;
        background: #f4f4f4;
    }

    .thumb svg {
        display: block;
    }

    .preview .tri {
        border-top-color: #9a9a9a;
    }

    .type {
        display: flex;
        flex: none;
        height: 24px;
    }

    .picker {
        position: relative;
        width: 316px;
        margin-left: 1px;
    }

    .app .picker select {
        width: 100%;
        height: 23px;
        padding-left: 3px;
        border: 1px solid #a4a4a4;
        background: #dfdfdf;
        color: #000;
        appearance: none;
    }

    .picker svg {
        position: absolute;
        top: 9px;
        right: 4px;
        pointer-events: none;
    }

    .app .edit {
        display: flex;
        align-items: center;
        gap: 4px;
        height: 20px;
        margin-left: 6px;
        color: #a0a0a0;
    }

    .grid {
        display: flex;
        flex: 1;
        min-height: 0;
    }

    .list {
        flex: 1;
        margin-left: 1px;
        overflow: hidden;
        background: #fff;
    }

    table {
        width: 100%;
        table-layout: fixed;
        border-collapse: separate;
        border-spacing: 0;
        color: #000;
    }

    .key {
        width: 186px;
    }

    .extra {
        width: 12px;
    }

    th, td {
        box-sizing: border-box;
        height: 18px;
        padding: 0 0 0 2px;
        border-right: 1px dotted #777;
        border-bottom: 1px dotted #777;
        font-weight: 400;
        line-height: 15px;
        text-align: left;
        vertical-align: top;
        white-space: nowrap;
    }

    th {
        padding-left: 8px;
    }

    .group th, .group td {
        border: 0;
        background: #dbdbdb;
        line-height: 18px;
    }

    .group th {
        padding-left: 2px;
    }

    .group td {
        padding: 0;
        overflow: visible;
    }

    .app .group button {
        display: flex;
        align-items: center;
        height: 17px;
    }

    .off th, .off td {
        color: #777;
    }

    .editing {
        padding: 0;
    }

    .app .editing input {
        display: block;
        width: 100%;
        height: 17px;
        padding: 0 2px 1px;
        border: 1px solid #000;
    }

    .more {
        padding: 0 0 0 1px;
    }

    .app .more button {
        display: block;
        width: 10px;
        height: 16px;
        border: 1px solid #b0b0b0;
        border-bottom-width: 2px;
        background: #e1e1e1;
    }

    .scroll {
        display: flex;
        flex-direction: column;
        flex: none;
        width: 15px;
        margin: 0 3px 0 1px;
        background: #f0f0f0;
    }

    .scroll button {
        display: flex;
        align-items: center;
        justify-content: center;
        height: 17px;
    }

    .track {
        flex: 1;
        min-height: 0;
    }

    .thumbbar {
        display: block;
        height: 56%;
        background: #cdcdcd;
    }

    .browser .thumbbar {
        height: 100%;
    }

    .foot {
        display: flex;
        align-items: center;
        justify-content: space-between;
        flex: none;
        height: 26px;
        padding: 0 4px 1px 3px;
    }

    .foot a {
        color: #0a64c8;
    }

    .app .apply {
        width: 73px;
        height: 21px;
        border: 1px solid #bfbfbf;
        background: #cccccc;
        color: #838383;
    }

    .browser {
        display: flex;
        flex-direction: column;
        flex: none;
        height: 47px;
        overflow: hidden;
    }

    .tree {
        flex: 1;
        padding-left: 4px;
        margin-left: 1px;
        overflow: hidden;
        list-style: none;
        background: #fff;
        color: #000;
    }

    .tree li {
        display: flex;
        align-items: center;
        height: 18px;
    }

    .tree .child {
        gap: 13px;
        padding-left: 20px;
    }

    .app .node {
        display: flex;
        align-items: center;
        justify-content: center;
        width: 9px;
        height: 9px;
        flex: none;
        border: 1px solid #919191;
    }

    .node::before {
        content: '';
        width: 5px;
        height: 1px;
        background: #2b4a8a;
    }

    .dash {
        width: 6px;
        margin-right: 1px;
        border-top: 1px dotted #888;
    }

    .sel {
        margin-left: 4px;
        padding: 1px 3px;
        background: #dedede;
    }

    /* view area */
    main {
        display: flex;
        flex-direction: column;
        flex: 1;
        min-width: 0;
        background: #fff;
    }

    .views {
        display: flex;
        flex: none;
        height: 20px;
        background: #cacaca;
    }

    .app .viewtab {
        display: flex;
        align-items: center;
        gap: 7px;
        box-sizing: border-box;
        width: 148px;
        padding-left: 5px;
        color: #444;
    }

    .viewtab span {
        padding-top: 2px;
    }

    .app .viewtab.current {
        width: 128px;
        padding: 0 4px 0 5px;
        background: #fff;
        color: #222;
        font-weight: 700;
    }

    .current span {
        flex: 1;
    }

    .canvas {
        flex: 1;
        min-height: 0;
        width: 100%;
    }
</style>
